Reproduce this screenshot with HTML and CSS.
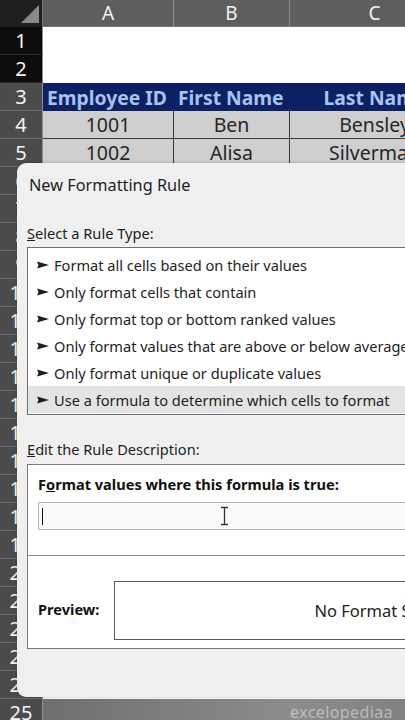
FILE: index.html
```html
<!DOCTYPE html>
<html>
<head>
<meta charset="utf-8">
<link rel="stylesheet" href="styles.css">
</head>
<body>
<div class="page">
  <div class="sheet">
    <div class="corner"><svg width="43" height="27" viewBox="0 0 43 27"><polygon points="39,5 39,23 21,23" fill="#8a8a8a"/></svg></div>
    <div class="colhead">A</div>
    <div class="colhead">B</div>
    <div class="colhead last">C</div>

    <div class="rowhead dark">1</div><div class="cell blank span3"></div>
    <div class="rowhead dark">2</div><div class="cell blank span3"></div>

    <div class="rowhead">3</div>
    <div class="cell hdr left">Employee ID</div>
    <div class="cell hdr left">First Name</div>
    <div class="cell hdr center">Last Name</div>

    <div class="rowhead">4</div>
    <div class="cell data">1001</div>
    <div class="cell data">Ben</div>
    <div class="cell data">Bensley</div>

    <div class="rowhead">5</div>
    <div class="cell data">1002</div>
    <div class="cell data">Alisa</div>
    <div class="cell data">Silverman</div>

    <div class="rowhead">6</div><div class="cell span3"></div>
    <div class="rowhead">7</div><div class="cell span3"></div>
    <div class="rowhead">8</div><div class="cell span3"></div>
    <div class="rowhead">9</div><div class="cell span3"></div>
    <div class="rowhead">10</div><div class="cell span3"></div>
    <div class="rowhead">11</div><div class="cell span3"></div>
    <div class="rowhead">12</div><div class="cell span3"></div>
    <div class="rowhead">13</div><div class="cell span3"></div>
    <div class="rowhead">14</div><div class="cell span3"></div>
    <div class="rowhead">15</div><div class="cell span3"></div>
    <div class="rowhead">16</div><div class="cell span3"></div>
    <div class="rowhead">17</div><div class="cell span3"></div>
    <div class="rowhead">18</div><div class="cell span3"></div>
    <div class="rowhead">19</div><div class="cell span3"></div>
    <div class="rowhead">20</div><div class="cell span3"></div>
    <div class="rowhead">21</div><div class="cell span3"></div>
    <div class="rowhead">22</div><div class="cell span3"></div>
    <div class="rowhead">23</div><div class="cell span3"></div>
    <div class="rowhead">24</div><div class="cell span3"></div>
    <div class="rowhead">25</div><div class="cell dim span3"><span class="watermark">excelopediaa</span></div>
  </div>

  <div class="dialog">
    <div class="title">New Formatting Rule</div>
    <div class="label select"><span class="acc">S</span>elect a Rule Type:</div>
    <div class="listbox">
      <div class="item"><svg class="arrow" width="12" height="8" viewBox="0 0 12 8"><polygon points="0,0.5 12,4 0,7.5 1.5,4" fill="#1e1e1e"/></svg>Format all cells based on their values</div>
      <div class="item"><svg class="arrow" width="12" height="8" viewBox="0 0 12 8"><polygon points="0,0.5 12,4 0,7.5 1.5,4" fill="#1e1e1e"/></svg>Only format cells that contain</div>
      <div class="item"><svg class="arrow" width="12" height="8" viewBox="0 0 12 8"><polygon points="0,0.5 12,4 0,7.5 1.5,4" fill="#1e1e1e"/></svg>Only format top or bottom ranked values</div>
      <div class="item"><svg class="arrow" width="12" height="8" viewBox="0 0 12 8"><polygon points="0,0.5 12,4 0,7.5 1.5,4" fill="#1e1e1e"/></svg>Only format values that are above or below average</div>
      <div class="item"><svg class="arrow" width="12" height="8" viewBox="0 0 12 8"><polygon points="0,0.5 12,4 0,7.5 1.5,4" fill="#1e1e1e"/></svg>Only format unique or duplicate values</div>
      <div class="item selected"><svg class="arrow" width="12" height="8" viewBox="0 0 12 8"><polygon points="0,0.5 12,4 0,7.5 1.5,4" fill="#1e1e1e"/></svg>Use a formula to determine which cells to format</div>
    </div>
    <div class="label edit"><span class="acc">E</span>dit the Rule Description:</div>
    <div class="descbox">
      <div class="upper">
        <div class="bold">F<span class="acc">o</span>rmat values where this formula is true:</div>
        <div class="input">
          <span class="caret"></span>
          <svg class="ibeam" width="9" height="20" viewBox="0 0 9 20"><path d="M1 1.5h7M4.5 1.5v17M1 18.5h7" stroke="#333" stroke-width="1.3" fill="none"/></svg>
        </div>
      </div>
      <div class="lower">
        <div class="bold">Preview:</div>
        <div class="preview">No Format Set</div>
      </div>
    </div>
  </div>
</div>
</body>
</html>
```

FILE: styles.css
```css
html, body {
  margin: 0;
  padding: 0;
}
body {
  width: 405px;
  height: 720px;
  overflow: hidden;
  background: #4b4b4b;
  font-family: "Noto Sans", "Open Sans", sans-serif;
}
.page {
  position: relative;
  width: 405px;
  height: 720px;
  overflow: hidden;
}
.sheet {
  display: grid;
  grid-template-columns: 43px 131px 116px 170px;
  grid-template-rows: 27px;
  grid-auto-rows: 28px;
  width: 460px;
}
.corner {
  background: #1e1e1e;
  border-right: 1px solid #777;
  box-sizing: border-box;
}
.corner svg { display: block; }
.colhead {
  background: #5e5e5e;
  color: #f2f2f2;
  font-size: 19px;
  display: flex;
  align-items: center;
  justify-content: center;
  border-right: 1px solid #878787;
  border-bottom: 1px solid #777;
  box-sizing: border-box;
}
.rowhead {
  background: #4b4b4b;
  color: #f4f4f4;
  font-size: 20px;
  display: flex;
  align-items: center;
  justify-content: center;
  border-bottom: 1px solid #6c6c6c;
  border-right: 1px solid #8d8d8d;
  box-sizing: border-box;
}
.rowhead.dark {
  background: #0c0c0c;
  border-bottom-color: #2a2a2a;
}
.cell {
  box-sizing: border-box;
  font-size: 19.5px;
  display: flex;
  align-items: center;
  overflow: hidden;
  white-space: nowrap;
  background: #ffffff;
}
.span3 { grid-column: span 3; }
.cell.blank { background: #ffffff; }
.cell.hdr {
  background: #0b2163;
  color: #a9c3ef;
  font-weight: bold;
  font-size: 19.3px;
}
.cell.hdr.left { padding-left: 4px; }
.cell.hdr.center { justify-content: center; }
.cell.data {
  background: #cfcfcf;
  color: #262626;
  justify-content: center;
  border-right: 1px solid #3a3a3a;
  border-bottom: 1px solid #3a3a3a;
}
.cell.dim {
  background: linear-gradient(90deg, #6f6f6f, #8c8c8c 60%, #7c7c7c);
  justify-content: flex-end;
  position: relative;
}
.watermark {
  color: rgba(240, 240, 240, 0.5);
  font-size: 16px;
  letter-spacing: 0.4px;
  margin-right: 67px;
  margin-bottom: 2px;
}

/* dialog */
.dialog {
  position: absolute;
  left: 17px;
  top: 163px;
  width: 430px;
  height: 534px;
  background: #f0f0f0;
  border-radius: 9px;
  box-shadow: 0 0 3px rgba(0,0,0,0.3);
  color: #1e1e1e;
  display: flex;
  flex-direction: column;
  padding-left: 10px;
  box-sizing: border-box;
}
.title {
  font-size: 16.3px;
  margin-top: 11px;
  margin-left: 2px;
  line-height: 22px;
}
.acc { text-decoration: underline; }
.label {
  font-size: 14.6px;
  line-height: 20px;
}
.label.select { margin-top: 27px; }
.label.edit { margin-top: 24px; }
.listbox {
  margin-top: 4px;
  background: #ffffff;
  border: 1px solid #6e6e6e;
  border-right: none;
  padding-top: 3px;
  height: 168px;
  box-sizing: border-box;
}
.item {
  height: 27px;
  display: flex;
  align-items: center;
  font-size: 14.6px;
  white-space: nowrap;
  padding-left: 9px;
  color: #1e1e1e;
}
.item.selected { background: #e4e4e4; }
.arrow {
  flex: none;
  margin-right: 5px;
  margin-top: 1px;
}
.descbox {
  margin-top: 5px;
  background: #ffffff;
  border: 1px solid #7a7a7a;
  border-right: none;
  height: 185px;
  box-sizing: border-box;
  display: flex;
  flex-direction: column;
}
.upper {
  height: 91px;
  border-bottom: 1px solid #8a8a8a;
  box-sizing: border-box;
  padding: 9px 0 0 10px;
}
.bold {
  font-size: 14.6px;
  font-weight: bold;
  line-height: 20px;
  color: #111;
}
.input {
  margin-top: 8px;
  height: 28px;
  border: 1px solid #b4b4b4;
  border-radius: 2px;
  border-right: none;
  box-sizing: border-box;
  position: relative;
  background: #fafafa;
}
.caret {
  position: absolute;
  left: 3px;
  top: 5px;
  width: 1px;
  height: 17px;
  background: #111;
}
.ibeam {
  position: absolute;
  left: 181px;
  top: 3px;
}
.lower {
  flex: 1;
  display: flex;
  align-items: flex-start;
  padding: 25px 0 0 10px;
}
.lower .bold { margin-top: 18px; }
.preview {
  margin-left: 15px;
  height: 59px;
  flex: 1;
  border: 1px solid #5a5a5a;
  border-right: none;
  box-sizing: border-box;
  display: flex;
  align-items: center;
  padding-left: 199px;
  font-size: 16.5px;
  white-space: nowrap;
  color: #222;
}
```
